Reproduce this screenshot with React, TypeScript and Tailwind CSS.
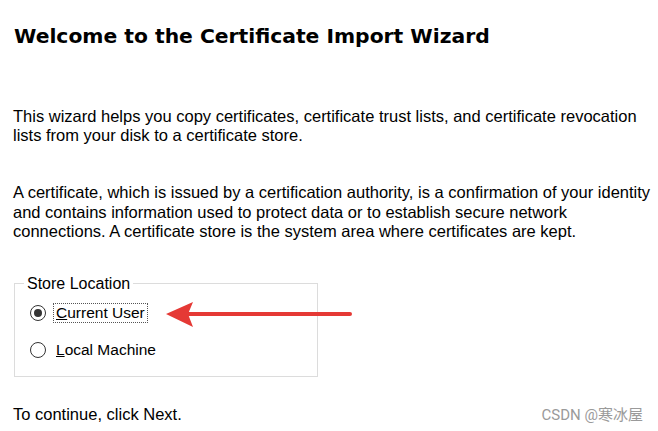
import React from 'react'

function Radio({ checked }: { checked?: boolean }) {
  return (
    <span className="flex h-[16px] w-[16px] shrink-0 items-center justify-center rounded-full border border-[#333333] bg-white">
      {checked && <span className="h-[8px] w-[8px] rounded-full bg-[#333333]" />}
    </span>
  )
}

export default function App() {
  return (
    <div
      className="relative h-[431px] w-[658px] overflow-hidden bg-white text-black"
      style={{ fontFamily: '"Liberation Sans", Arial, sans-serif' }}
    >
      <div className="px-[13px] pt-[22px]">
        <h1
          className="whitespace-nowrap pl-[1px] text-[20.3px] font-bold leading-[28px]"
          style={{ fontFamily: '"DejaVu Sans", Verdana, sans-serif' }}
        >
          Welcome to the Certificate Import Wizard
        </h1>

        <p className="mt-[57px] whitespace-nowrap text-[16.5px] leading-[19px]">
          This wizard helps you copy certificates, certificate trust lists, and certificate revocation
          <br />
          lists from your disk to a certificate store.
        </p>

        <p className="mt-[38px] whitespace-nowrap text-[16.5px] leading-[19.5px]">
          A certificate, which is issued by a certification authority, is a confirmation of your identity
          <br />
          and contains information used to protect data or to establish secure network
          <br />
          connections. A certificate store is the system area where certificates are kept.
        </p>

        {/* Store Location group */}
        <fieldset className="ml-[1px] mt-[33px] h-[102px] w-[304px] border border-[#dcdcdc] px-[15px]">
          <legend className="ml-[-6px] px-[3px] text-[16px] leading-[18px]">Store Location</legend>
          <div className="mt-[10px] flex items-center gap-[7px]">
            <Radio checked />
            <span className="border border-dotted border-[#555] px-[2px] text-[15.5px] leading-[18px]">
              <span className="underline">C</span>urrent User
            </span>
          </div>
          <div className="mt-[18px] flex items-center gap-[7px]">
            <Radio />
            <span className="px-[3px] text-[15.5px] leading-[18px]">
              <span className="underline">L</span>ocal Machine
            </span>
          </div>
        </fieldset>

        <div className="mt-[27px] flex items-center justify-between pr-[2px]">
          <span className="text-[16.5px] leading-[19px]">To continue, click Next.</span>
          <span
            className="text-[15px] text-[#9a9a9a]"
            style={{ fontFamily: 'Roboto, "Noto Sans CJK SC", sans-serif' }}
          >
            CSDN @寒冰屋
          </span>
        </div>
      </div>

      {/* red annotation arrow */}
      <svg
        className="absolute left-[164px] top-[301px]"
        width="190"
        height="30"
        viewBox="0 0 190 30"
      >
        <line x1="22" y1="13" x2="186" y2="13" stroke="#e53935" strokeWidth="4" strokeLinecap="round" />
        <path d="M2 13 L29 1 L24 13 L29 26 Z" fill="#e53935" />
      </svg>
    </div>
  )
}
